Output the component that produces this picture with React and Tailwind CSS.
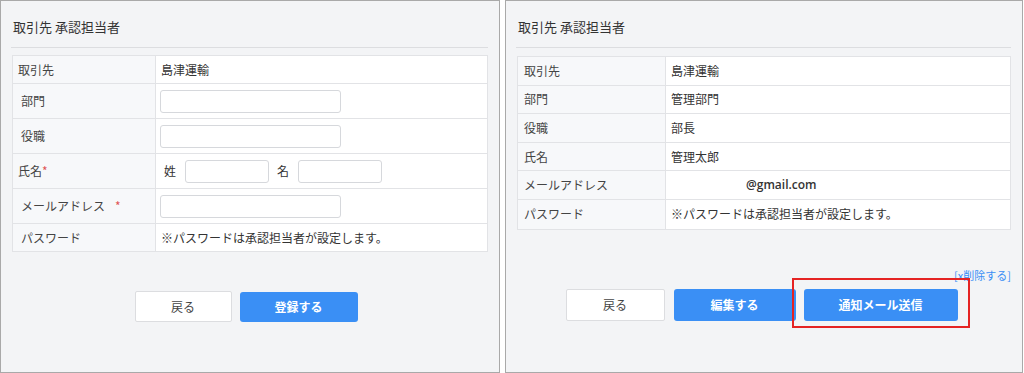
import React from "react";

const font = { fontFamily: '"Noto Sans CJK JP", "Noto Sans", sans-serif' };

function Input({ w }) {
  return <div className={`h-[23px] ${w} rounded-[3px] border border-[#d6d8dc] bg-white`} />;
}

function LRow({ label, h, children, indent = true, req }) {
  return (
    <div className={`flex ${h} border-b border-[#e2e3e6] last:border-b-0`}>
      <div className={`w-[143px] shrink-0 flex items-center bg-[#f7f8fa] border-r border-[#e2e3e6] ${indent ? "pl-[8px]" : "pl-[5px]"} text-[12px] text-[#444]`}>
        {label}
        {req}
      </div>
      <div className="flex-1 flex items-center pl-[4px] bg-white text-[12px] text-[#333]">{children}</div>
    </div>
  );
}

function RRow({ label, children }) {
  return (
    <div className="flex h-[28.6px] border-b border-[#e2e3e6] last:border-b-0">
      <div className="w-[148px] shrink-0 flex items-center bg-[#f7f8fa] border-r border-[#e2e3e6] pl-[6px] text-[12px] text-[#444]">
        {label}
      </div>
      <div className="flex-1 flex items-center pl-[5px] bg-white text-[12px] text-[#333]">{children}</div>
    </div>
  );
}

export default function App() {
  return (
    <div className="w-[1024px] h-[373px] bg-white flex" style={font}>
      <div className="w-[500px] h-[373px] border-[1.5px] border-[#a9a9a9] bg-[#f3f4f6] flex flex-col px-[10px]">
        <div className="h-[46px] flex items-center pt-[6px] pl-[2px] text-[13px] text-[#333]">取引先 承認担当者</div>
        <div className="h-px bg-[#dcdde0] mr-[1px]" />
        <div className="mt-[7px] ml-[1px] mr-[1px] border border-[#e2e3e6] flex flex-col">
          <LRow label="取引先" h="h-[28px]" indent={false}>
            <span className="pl-[1px]">島津運輸</span>
          </LRow>
          <LRow label="部門" h="h-[35px]">
            <Input w="w-[181px]" />
          </LRow>
          <LRow label="役職" h="h-[35px]">
            <Input w="w-[181px]" />
          </LRow>
          <LRow label="氏名" h="h-[35px]" indent={false} req={<span className="text-[#e05555]">*</span>}>
            <span className="pl-[4px] w-[25px]">姓</span>
            <Input w="w-[84px]" />
            <span className="pl-[8px] w-[29px]">名</span>
            <Input w="w-[84px]" />
          </LRow>
          <LRow label="メールアドレス" h="h-[35px]" req={<span className="text-[#e05555] pl-[10px]">*</span>}>
            <Input w="w-[181px]" />
          </LRow>
          <LRow label="パスワード" h="h-[27px]">
            <span className="pl-[1px]">※パスワードは承認担当者が設定します。</span>
          </LRow>
        </div>
        <div className="flex justify-center gap-[8px] mt-[39px] pr-[8px]">
          <button className="w-[97px] h-[31px] bg-white border border-[#dcdde0] rounded-[2px] text-[12px] text-[#444]">戻る</button>
          <button className="w-[118px] h-[30px] mt-[1px] bg-[#3a8ff5] rounded-[3px] text-[12px] font-bold text-white">登録する</button>
        </div>
      </div>
      <div className="w-[5px]" />
      <div className="w-[518px] h-[373px] border-[1.5px] border-[#a9a9a9] bg-[#f3f4f6] flex flex-col pl-[10px] pr-[11px]">
        <div className="h-[46px] flex items-center pt-[6px] pl-[2px] text-[13px] text-[#333]">取引先 承認担当者</div>
        <div className="h-px bg-[#dcdde0]" />
        <div className="mt-[8px] ml-[1px] border border-[#e2e3e6] flex flex-col">
          <RRow label="取引先">島津運輸</RRow>
          <RRow label="部門">管理部門</RRow>
          <RRow label="役職">部長</RRow>
          <RRow label="氏名">管理太郎</RRow>
          <RRow label="メールアドレス">
            <span className="pl-[75px] font-semibold text-[12px]" style={{ fontFamily: '"Open Sans", "Noto Sans", sans-serif' }}>@gmail.com</span>
          </RRow>
          <RRow label="パスワード">※パスワードは承認担当者が設定します。</RRow>
        </div>
        <div className="flex justify-end mt-[38px] h-[14px] text-[11px] leading-[14px] text-[#3a8ff5]">[x削除する]</div>
        <div className="flex justify-center items-start mt-[-4px] pl-[8px]">
          <button className="mt-[11px] w-[99px] h-[32px] bg-white border border-[#dcdde0] rounded-[2px] text-[12px] text-[#444]">戻る</button>
          <button className="mt-[11px] ml-[9px] w-[122px] h-[32px] bg-[#3a8ff5] rounded-[3px] text-[12px] font-bold text-white">編集する</button>
          <div className="ml-[-4px] border-2 border-[#e52323] w-[178px] h-[50px] flex items-start pt-[9px] pl-[10px]">
            <button className="w-[154px] h-[32px] bg-[#3a8ff5] rounded-[3px] text-[12px] font-bold text-white">通知メール送信</button>
          </div>
        </div>
      </div>
    </div>
  );
}
